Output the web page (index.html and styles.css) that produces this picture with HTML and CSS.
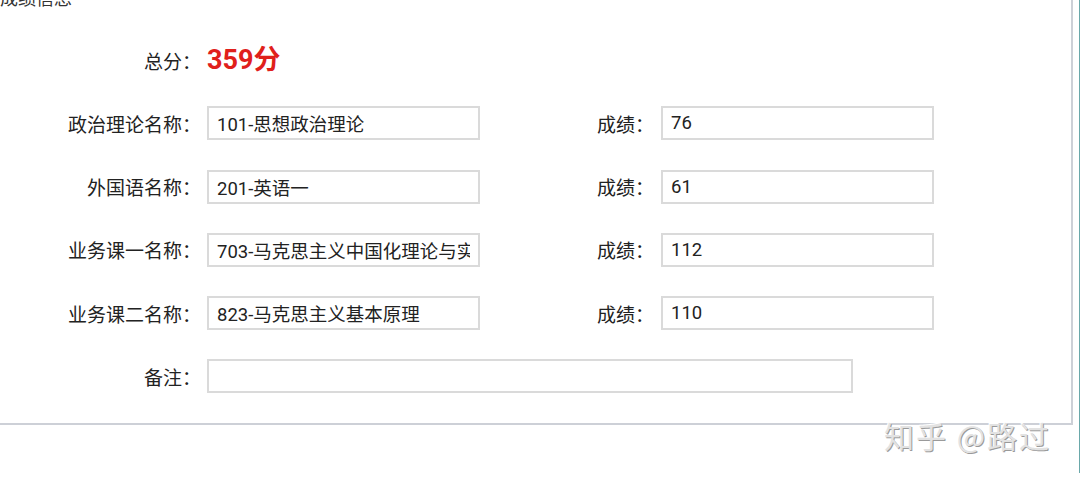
FILE: index.html
```html
<!DOCTYPE html>
<html lang="zh-CN">
<head>
<meta charset="utf-8">
<title>成绩信息</title>
<link rel="stylesheet" href="styles.css">
</head>
<body>
<div class="page">
  <fieldset class="panel">
    <legend class="panel-title">成绩信息</legend>
    <div class="form">
      <div class="label">总分：</div>
      <div class="total">359分</div>

      <div class="label">政治理论名称：</div>
      <input class="field" type="text" value="101-思想政治理论" readonly>
      <div class="label label-score">成绩：</div>
      <input class="field" type="text" value="76" readonly>

      <div class="label">外国语名称：</div>
      <input class="field" type="text" value="201-英语一" readonly>
      <div class="label label-score">成绩：</div>
      <input class="field" type="text" value="61" readonly>

      <div class="label">业务课一名称：</div>
      <input class="field" type="text" value="703-马克思主义中国化理论与实践" readonly>
      <div class="label label-score">成绩：</div>
      <input class="field" type="text" value="112" readonly>

      <div class="label">业务课二名称：</div>
      <input class="field" type="text" value="823-马克思主义基本原理" readonly>
      <div class="label label-score">成绩：</div>
      <input class="field" type="text" value="110" readonly>

      <div class="label">备注：</div>
      <input class="field field-wide" type="text" value="" readonly>
    </div>
  </fieldset>
  <div class="watermark">知乎 @路过</div>
</div>
</body>
</html>
```

FILE: styles.css
```css
html, body {
  margin: 0;
  padding: 0;
  background: #ffffff;
}

body {
  font-family: Roboto, "Noto Sans CJK SC", sans-serif;
  color: #222222;
  overflow: hidden;
}

.page {
  position: relative;
  width: 1079px;
  height: 485px;
  border-right: 1px solid #6aa8aa;
}

.panel {
  box-sizing: border-box;
  width: 1085px;
  height: 437px;
  margin: -12px 0 0 -12px;
  padding: 0 0 0 10px;
  border: 2px solid #cdd0d7;
}

.panel-title {
  font-size: 18px;
  line-height: 22px;
  color: #333333;
  padding: 0 4px;
  margin-left: -4px;
}

.form {
  display: grid;
  grid-template-columns: 207px 273px 181px 273px;
  grid-auto-rows: 34px;
  row-gap: 29.3px;
  column-gap: 0;
  padding-top: 33px;
  align-items: center;
}

.label {
  font-size: 19px;
  color: #222222;
  text-align: right;
  white-space: nowrap;
  padding-right: 6px;
}

.label-score {
  padding-right: 7px;
}

.total {
  grid-column: 2 / 5;
  font-size: 27px;
  font-weight: 700;
  color: #e0201b;
  line-height: 30px;
}

.field {
  box-sizing: border-box;
  width: 273px;
  height: 34px;
  margin: 0;
  border: 2px solid #dadada;
  background: #ffffff;
  padding: 0 8px;
  font-family: Roboto, "Noto Sans CJK SC", sans-serif;
  font-size: 18.5px;
  color: #222222;
  outline: none;
}

.field-wide {
  grid-column: 2 / 5;
  width: 646px;
}

.watermark {
  position: absolute;
  left: 884px;
  top: 425px;
  font-family: "Noto Sans CJK SC", sans-serif;
  font-size: 30px;
  letter-spacing: 2px;
  color: #e2e2e2;
  text-shadow: 1px 1px 0 #9a9a9a, -1px -1px 0 #ffffff;
  white-space: nowrap;
}
```
